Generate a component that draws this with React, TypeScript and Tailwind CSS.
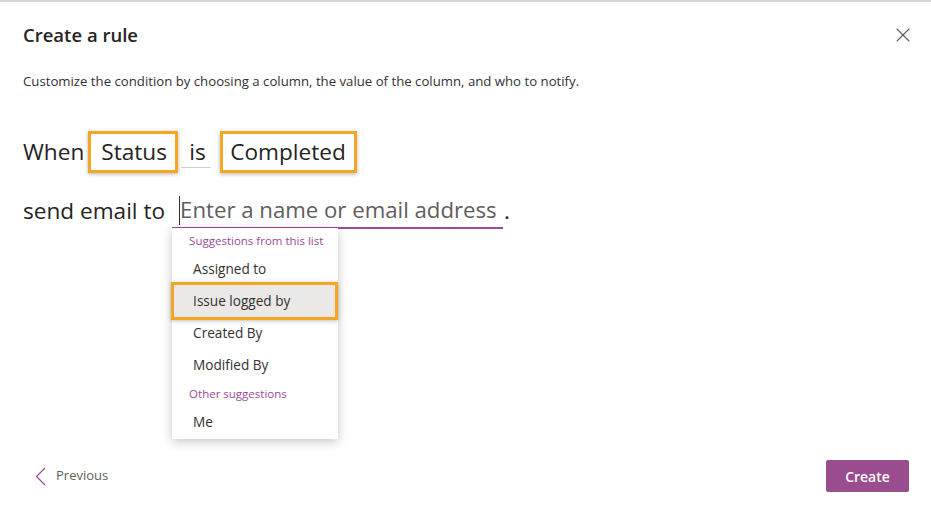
import { X } from "lucide-react";

const font = "font-['Segoe_UI','Open_Sans','Noto_Sans',sans-serif]";

const listItems = ["Assigned to", "Issue logged by", "Created By", "Modified By"];

function Suggestions() {
  return (
    <div className="absolute left-0 top-[calc(100%+1px)] w-[166px] bg-white shadow-[0_3px_10px_rgba(0,0,0,0.22)] pt-[1px] pb-[2px]">
      <div className="pl-[17px] h-[24px] flex items-center text-[11.5px] text-[#9b4a98]">
        Suggestions from this list
      </div>
      {listItems.map((item) =>
        item === "Issue logged by" ? (
          <div key={item} className="relative h-[32px] flex items-center pl-[21px] text-[13.6px] text-[#323130]">
            <span className="absolute left-[-1px] right-0 top-[-3px] bottom-[-3px] bg-[#ebe9e7] border-[3px] border-[#f6a623] shadow-[0_1px_4px_rgba(0,0,0,0.25)]" />
            <span className="relative">{item}</span>
          </div>
        ) : (
          <div key={item} className="h-[32px] flex items-center pl-[21px] text-[13.6px] text-[#323130]">
            {item}
          </div>
        )
      )}
      <div className="pl-[17px] h-[26px] flex items-center text-[11.5px] text-[#9b4a98]">
        Other suggestions
      </div>
      <div className="h-[30px] flex items-center pl-[21px] text-[13.6px] text-[#323130]">Me</div>
    </div>
  );
}

export default function App() {
  return (
    <div className={`relative w-[931px] h-[509px] bg-white border-t-2 border-[#d4d4d4] flex flex-col ${font}`}>
      <div className="flex items-center justify-between pl-[23px] pr-[16px] pt-[21px]">
        <h1 className="text-[18.5px] font-semibold text-[#252423] leading-[24px]">Create a rule</h1>
        <X className="w-[24px] h-[24px] text-[#605e5c]" strokeWidth={1.1} />
      </div>

      <p className="pl-[23px] mt-[25px] text-[13.2px] text-[#323130] leading-[18px]">
        Customize the condition by choosing a column, the value of the column, and who to notify.
      </p>

      <div className="flex items-center pl-[23px] mt-[41px] text-[22.6px] text-[#252423] h-[42px]">
        <span className="mr-[4px]">When</span>
        <span className="h-[42px] w-[90px] flex items-center pl-[10px] border-[3px] border-[#f6a623] shadow-[0_1px_4px_rgba(0,0,0,0.3)]">
          Status
        </span>
        <span className="ml-[3px] w-[30px] h-[42px] flex items-center pl-[8px] relative">
          is
          <span className="absolute left-0 right-0 bottom-[5px] h-px bg-[#d2d0ce]" />
        </span>
        <span className="ml-[9px] h-[42px] w-[137px] flex items-center pl-[7px] border-[3px] border-[#f6a623] shadow-[0_1px_4px_rgba(0,0,0,0.3)]">
          Completed
        </span>
      </div>

      <div className="flex items-center pl-[23px] mt-[20px] text-[22.6px] text-[#252423] h-[36px]">
        <span>send email to</span>
        <div className="relative ml-[7px] h-[36px] w-[331px] flex items-center border-b-2 border-[#9b4a98]">
          <span className="ml-[7px] w-px h-[29px] bg-[#323130]" />
          <span className="text-[#605e5c] text-[22.2px]">Enter a name or email address</span>
          <Suggestions />
        </div>
        <span className="ml-[1px]">.</span>
      </div>

      <div className="mt-auto mb-[17px] flex items-center justify-between pl-[35px] pr-[22px]">
        <div className="flex items-center gap-[10px] text-[13px] text-[#605e5c]">
          <svg width="11" height="19" viewBox="0 0 11 19" fill="none">
            <path d="M10 1 L1.5 9.5 L10 18" stroke="#9b4a98" strokeWidth="1.2" />
          </svg>
          <span>Previous</span>
        </div>
        <button className="w-[83px] h-[32px] rounded-[2px] bg-[#994c8e] text-white text-[14px] font-semibold">
          Create
        </button>
      </div>
    </div>
  );
}
